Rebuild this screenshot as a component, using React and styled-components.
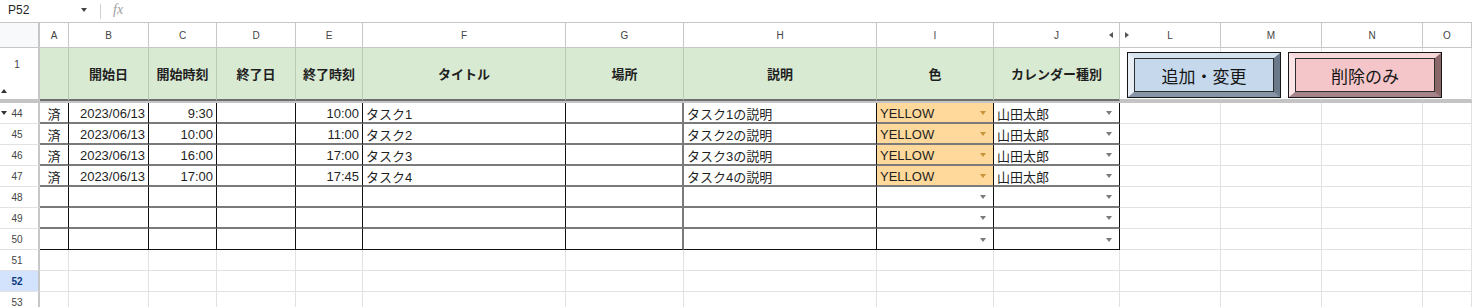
import { Fragment } from "react";
import styled, { createGlobalStyle } from "styled-components";

const GlobalStyle = createGlobalStyle`
  body {
    margin: 0;
    background: #fff;
    font-family: "Liberation Sans", "Noto Sans CJK JP", sans-serif;
  }
`;

// column widths measured from the sheet
const COLS = [
  { id: "A", w: "29px", head: "" },
  { id: "B", w: "80px", head: "開始日" },
  { id: "C", w: "68px", head: "開始時刻" },
  { id: "D", w: "79px", head: "終了日" },
  { id: "E", w: "67px", head: "終了時刻" },
  { id: "F", w: "203px", head: "タイトル" },
  { id: "G", w: "118px", head: "場所" },
  { id: "H", w: "193px", head: "説明" },
  { id: "I", w: "117px", head: "色" },
  { id: "J", w: "126px", head: "カレンダー種別" },
  { id: "L", w: "101px" },
  { id: "M", w: "101px" },
  { id: "N", w: "101px" },
  { id: "O", w: "1fr" },
];
const TABLE_COLS = COLS.slice(0, 10);
const EXTRA_COLS = COLS.slice(10);

const ALIGN = ["center", "right", "right", "right", "right", "left", "left", "left", "left", "left"];

const LIGHT = "1px solid #e2e2e2";
const HEAD = "1px solid #c7c7c7";
const BLACK = "1px solid #111";
const THICK = "2px solid #7a7a7a";

const task = (n, start, end) => [
  "済", "2023/06/13", start, "", end, `タスク${n}`, "", `タスク${n}の説明`, "YELLOW", "山田太郎",
];

const DATA_ROWS = [
  { n: 44, toggle: true, cells: task(1, "9:30", "10:00") },
  { n: 45, cells: task(2, "10:00", "11:00") },
  { n: 46, cells: task(3, "16:00", "17:00") },
  { n: 47, cells: task(4, "17:00", "17:45") },
  { n: 48, cells: [] },
  { n: 49, cells: [] },
  { n: 50, cells: [], last: true },
];

const Page = styled.div`
  width: 1472px;
  height: 307px;
  overflow: hidden;
`;

const FormulaBar = styled.div`
  height: 23px;
  box-sizing: border-box;
  border-bottom: 1px solid #c7c7c7;
  display: flex;
  align-items: center;
  font-size: 12px;
  color: #1f1f1f;
`;

const NameBox = styled.div`
  width: 100px;
  box-sizing: border-box;
  padding: 0 13px 2px 8px;
  display: flex;
  align-items: center;
`;

const Triangle = styled.span`
  width: 0;
  height: 0;
  border-left: ${({ $size = 3 }) => $size}px solid transparent;
  border-right: ${({ $size = 3 }) => $size}px solid transparent;
  border-top: ${({ $size = 3 }) => $size + 1}px solid ${({ $color }) => $color || "#444"};
  margin-left: auto;
`;

const Divider = styled.span`
  width: 1px;
  height: 15px;
  background: #d0d0d0;
`;

const Fx = styled.span`
  margin-left: 12px;
  font-family: "Liberation Serif", serif;
  font-style: italic;
  font-size: 14px;
  color: #a0a0a0;
  padding-bottom: 2px;
`;

const Sheet = styled.div`
  position: relative;
  display: grid;
  grid-template-columns: 40px ${COLS.map((c) => c.w).join(" ")};
  grid-template-rows: 25px 53px 2px repeat(10, 21px);
`;

const Corner = styled.div`
  background: #f8f9fa;
  border-right: 2px solid #c7c7c7;
  border-bottom: ${HEAD};
`;

const ColHead = styled.div`
  position: relative;
  box-sizing: border-box;
  display: flex;
  align-items: center;
  justify-content: center;
  font-size: 10px;
  color: #444;
  background: #fff;
  border-right: ${HEAD};
  border-bottom: ${HEAD};
`;

const HiddenMark = styled.span`
  position: absolute;
  top: 9px;
  ${({ $side }) => ($side === "left" ? "right: 6px;" : "left: 5px;")}
  width: 0;
  height: 0;
  border-top: 3px solid transparent;
  border-bottom: 3px solid transparent;
  ${({ $side }) =>
    $side === "left" ? "border-right: 4px solid #555;" : "border-left: 4px solid #555;"}
`;

const RowHead = styled.div`
  position: relative;
  box-sizing: border-box;
  display: flex;
  align-items: center;
  justify-content: center;
  padding: 0 4px ${({ $lift }) => $lift || 0}px 0;
  font-size: 10px;
  font-weight: ${({ $active }) => ($active ? 700 : 400)};
  color: ${({ $active }) => ($active ? "#0b3a82" : "#444")};
  background: ${({ $active }) => ($active ? "#d3e3fd" : "#fff")};
  border-right: 2px solid #c7c7c7;
  border-bottom: ${({ $bottom }) => $bottom || LIGHT};
`;

const GroupToggle = styled.span`
  position: absolute;
  left: 1px;
  ${({ $up }) => ($up ? "bottom: 6px;" : "top: 8px;")}
  width: 0;
  height: 0;
  border-left: 3px solid transparent;
  border-right: 3px solid transparent;
  ${({ $up }) => ($up ? "border-bottom: 4px solid #333;" : "border-top: 4px solid #333;")}
`;

const HeaderCell = styled.div`
  box-sizing: border-box;
  display: flex;
  align-items: center;
  justify-content: center;
  background: ${({ $green }) => ($green ? "#d9ead3" : "#fff")};
  border-right: 1px solid ${({ $green }) => ($green ? "#b9c9b4" : "#e2e2e2")};
  border-bottom: 2px solid ${({ $green }) => ($green ? "#6e6e6e" : "#c4c4c4")};
  font-size: 13px;
  font-weight: 700;
  color: #1f1f1f;
  white-space: nowrap;
`;

const FreezeBar = styled.div`
  grid-column: 1 / -1;
  background: #c4c4c4;
`;

const Cell = styled.div`
  box-sizing: border-box;
  display: flex;
  align-items: center;
  justify-content: ${({ $align }) =>
    $align === "right" ? "flex-end" : $align === "center" ? "center" : "flex-start"};
  padding: 1px 3px 0;
  background: ${({ $bg }) => $bg || "#fff"};
  border-right: ${({ $right }) => $right || LIGHT};
  border-bottom: ${({ $bottom }) => $bottom || LIGHT};
  font-size: 13px;
  color: #1f1f1f;
  white-space: nowrap;
  overflow: hidden;
`;

const Caret = styled(Triangle)`
  margin-right: 4px;
  border-top-width: 4px;
  border-left-width: 3.5px;
  border-right-width: 3.5px;
`;

const DrawingButton = styled.div`
  position: absolute;
  top: 29px;
  left: ${({ $left }) => $left}px;
  width: 154px;
  height: 46px;
  box-sizing: border-box;
  border: 1px solid #161616;
  display: flex;
`;

const Bevel = styled.div`
  flex: 1;
  display: flex;
  border-style: solid;
  border-width: 5px 6px;
  border-color: ${({ $tone }) =>
    $tone === "pink"
      ? "#f6d8da #8a6769 #a5848a #fae4e5"
      : "#d6e3ef #6a7a8b #8796a6 #e7eef6"};
`;

const Face = styled.div`
  flex: 1;
  display: flex;
  align-items: center;
  justify-content: center;
  border: 1px solid #2e2e2e;
  background: ${({ $tone }) => ($tone === "pink" ? "#f4c6c9" : "#c6d9ec")};
  font-family: "Noto Sans CJK JP", sans-serif;
  font-size: 17px;
  color: #141414;
`;

function SheetButton({ left, tone, children }) {
  return (
    <DrawingButton $left={left}>
      <Bevel $tone={tone}>
        <Face $tone={tone}>{children}</Face>
      </Bevel>
    </DrawingButton>
  );
}

function DataRow({ row }) {
  return (
    <Fragment>
      <RowHead>
        {row.toggle && <GroupToggle />}
        {row.n}
      </RowHead>
      {TABLE_COLS.map((c, i) => {
        const value = row.cells[i] || "";
        const yellow = value === "YELLOW";
        return (
          <Cell
            key={c.id}
            $align={ALIGN[i]}
            $bg={yellow ? "#fed99b" : undefined}
            $right={i === 6 ? THICK : BLACK}
            $bottom={row.last ? BLACK : THICK}
          >
            {i >= 8 ? (
              <>
                <span>{value}</span>
                <Caret $color={yellow ? "#c8923a" : "#7a7a7a"} />
              </>
            ) : (
              value
            )}
          </Cell>
        );
      })}
      {EXTRA_COLS.map((c) => (
        <Cell key={c.id} />
      ))}
    </Fragment>
  );
}

function BlankRow({ n, active }) {
  return (
    <Fragment>
      <RowHead $active={active}>{n}</RowHead>
      {COLS.map((c) => (
        <Cell key={c.id} />
      ))}
    </Fragment>
  );
}

export default function App() {
  return (
    <Page>
      <GlobalStyle />
      <FormulaBar>
        <NameBox>
          P52
          <Triangle $size={3} $color="#444" />
        </NameBox>
        <Divider />
        <Fx>fx</Fx>
      </FormulaBar>

      <Sheet>
        <Corner />
        {COLS.map((c) => (
          <ColHead key={c.id}>
            {c.id}
            {c.id === "J" && <HiddenMark $side="left" />}
            {c.id === "L" && <HiddenMark $side="right" />}
          </ColHead>
        ))}

        <RowHead $lift={18} $bottom="2px solid #c4c4c4">
          1
          <GroupToggle $up />
        </RowHead>
        {COLS.map((c, i) => (
          <HeaderCell key={c.id} $green={i < 10}>
            {c.head}
          </HeaderCell>
        ))}

        <FreezeBar />

        {DATA_ROWS.map((row) => (
          <DataRow key={row.n} row={row} />
        ))}
        <BlankRow n={51} />
        <BlankRow n={52} active />
        <BlankRow n={53} />

        <SheetButton left={1127} tone="blue">
          追加・変更
        </SheetButton>
        <SheetButton left={1288} tone="pink">
          削除のみ
        </SheetButton>
      </Sheet>
    </Page>
  );
}
